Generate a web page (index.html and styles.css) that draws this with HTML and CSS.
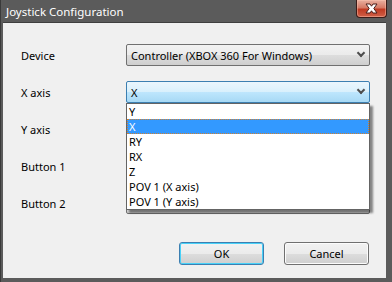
FILE: index.html
```html
<!DOCTYPE html>
<html lang="en">

<head>
    <meta charset="UTF-8">
    <title>Joystick Configuration</title>
    <link rel="stylesheet" href="styles.css">
</head>

<body>

    <div class="window">
        <div class="titlebar">
            <div class="title">Joystick Configuration</div>
            <div class="close-btn">
                <svg width="17" height="11" viewBox="0 0 17 11">
                    <path d="M3 1 L7 1 L8.5 3.2 L10 1 L14 1 L10.8 5.5 L14 10 L10 10 L8.5 7.8 L7 10 L3 10 L6.2 5.5 Z"
                        fill="#fff" stroke="#4a1e1a" stroke-width="1" stroke-linejoin="round" />
                </svg>
            </div>
        </div>

        <div class="client">
            <div class="form">
                <div class="label">Device</div>
                <div class="combo">
                    <span class="combo-text">Controller (XBOX 360 For Windows)</span>
                    <span class="arrow"></span>
                </div>

                <div class="label">X axis</div>
                <div class="combo-wrap">
                    <div class="combo active">
                        <span class="combo-text">X</span>
                        <span class="arrow"></span>
                    </div>
                    <!-- open dropdown list -->
                    <div class="options">
                        <div class="option">Y</div>
                        <div class="option highlighted">X</div>
                        <div class="option">RY</div>
                        <div class="option">RX</div>
                        <div class="option">Z</div>
                        <div class="option">POV 1 (X axis)</div>
                        <div class="option">POV 1 (Y axis)</div>
                    </div>
                </div>

                <!-- these combos sit behind the open list -->
                <div class="label">Y axis</div>
                <div class="combo">
                    <span class="arrow"></span>
                </div>

                <div class="label">Button 1</div>
                <div class="combo">
                    <span class="arrow"></span>
                </div>

                <div class="label">Button 2</div>
                <div class="combo">
                    <span class="arrow"></span>
                </div>
            </div>

            <div class="buttons">
                <button class="btn default">OK</button>
                <button class="btn">Cancel</button>
            </div>
        </div>
    </div>

</body>

</html>
```

FILE: styles.css
```css
html,
body {
    margin: 0;
    padding: 0;
}

body {
    font-family: "Noto Sans", "Open Sans", sans-serif;
    font-size: 11px;
    color: #000;
    width: 392px;
    height: 282px;
    overflow: hidden;
}

.window {
    width: 392px;
    height: 282px;
    box-sizing: border-box;
    background-color: #5b5b5b;
    border-left: 1px solid #3a3a3a;
    padding: 0 6px 4px 2px;
    display: flex;
    flex-direction: column;
}

.titlebar {
    height: 23px;
    display: flex;
    justify-content: space-between;
    align-items: flex-start;
}

.title {
    color: #fff;
    font-size: 11.5px;
    padding-left: 3px;
    padding-top: 4px;
    line-height: 15px;
}

.close-btn {
    width: 31px;
    height: 18px;
    margin-right: -1px;
    box-sizing: border-box;
    border: 1px solid #3c1c18;
    border-top: none;
    border-radius: 0 0 4px 4px;
    background: linear-gradient(#e8b0a0 0%, #d67a66 45%, #c03a22 55%, #d06048 100%);
    box-shadow: inset 0 0 0 1px rgba(255, 200, 180, 0.45);
    display: flex;
    align-items: center;
    justify-content: center;
}

.client {
    flex: 1;
    background-color: #f0f0f0;
    border-top: 1px solid #3f3f3f;
    margin-top: -1px;
    padding: 21px 16px 0 18px;
    display: flex;
    flex-direction: column;
}

.form {
    display: grid;
    grid-template-columns: 105px 244px;
    grid-auto-rows: 22px;
    row-gap: 15px;
    align-items: center;
}

.label {
    line-height: 15px;
}

.combo-wrap {
    position: relative;
    height: 22px;
}

.combo {
    height: 22px;
    box-sizing: border-box;
    border: 1px solid #707070;
    border-radius: 2px;
    background: linear-gradient(#f2f2f2 0%, #ebebeb 50%, #dddddd 51%, #cfcfcf 100%);
    display: flex;
    align-items: center;
    justify-content: space-between;
    padding: 0 5px 0 4px;
}

.combo.active {
    border-color: #3c7fb1;
    background: linear-gradient(#eaf6fd 0%, #d9f0fc 50%, #bee6fd 51%, #a7d9f5 100%);
}

.combo-text {
    line-height: 15px;
}

.arrow {
    width: 4px;
    height: 4px;
    margin-left: auto;
    border-right: 2px solid #4d4d4d;
    border-bottom: 2px solid #4d4d4d;
    transform: translateY(-2px) rotate(45deg);
}

.options {
    position: absolute;
    top: 22px;
    left: 0;
    width: 244px;
    box-sizing: border-box;
    border: 1px solid #646464;
    background-color: #fff;
    box-shadow: 3px 3px 2px rgba(0, 0, 0, 0.45);
    z-index: 10;
}

.option {
    height: 15px;
    line-height: 15px;
    padding-left: 2px;
}

.option.highlighted {
    background-color: #3399ff;
    color: #fff;
    outline: 1px dotted #d08030;
    outline-offset: -1px;
}

.buttons {
    display: flex;
    justify-content: flex-end;
    gap: 20px;
    margin-top: 28px;
    padding-right: 1px;
}

.btn {
    width: 85px;
    height: 23px;
    font-family: inherit;
    font-size: 11px;
    color: #000;
    border: 1px solid #707070;
    border-radius: 3px;
    background: linear-gradient(#f2f2f2 0%, #ebebeb 50%, #dddddd 51%, #cfcfcf 100%);
    box-shadow: inset 0 0 0 1px #fcfcfc;
    padding: 0;
}

.btn.default {
    border-color: #3c7fb1;
    box-shadow: inset 0 0 0 1px #48d1f8;
}
```
